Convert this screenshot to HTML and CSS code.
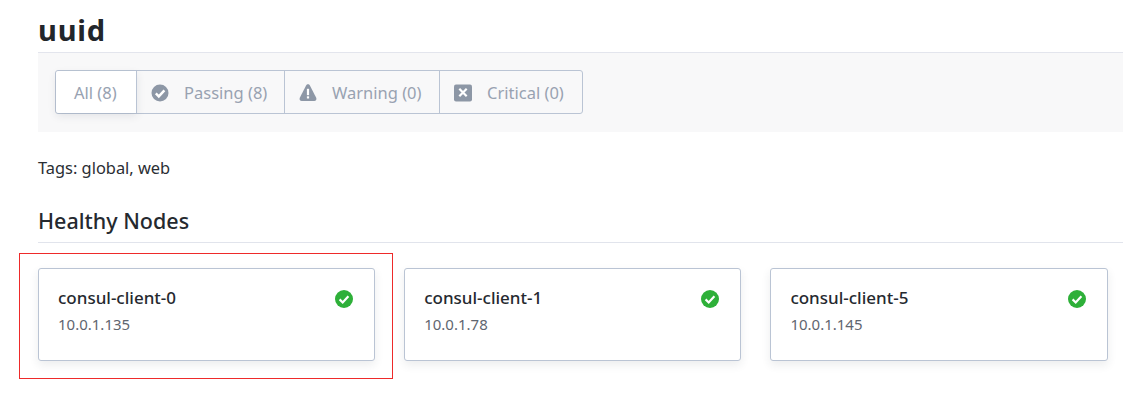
FILE: index.html
```html
<!DOCTYPE html>
<html lang="en">
<head>
<meta charset="utf-8">
<title>uuid</title>
<link rel="stylesheet" href="styles.css">
</head>
<body>
<main class="page">
  <header class="title-row"><h1 class="title">uuid</h1></header>
  <section class="filter-bar">
    <div class="tabs">
      <div class="tab tab-active">All (8)</div>
      <div class="tab tab-passing">
        <svg class="tab-icon" viewBox="0 0 18 18"><circle cx="9" cy="9" r="8.5" fill="#8d97a6"/><path d="M4.8 9.4l3 3 5.6-6" fill="none" stroke="#fff" stroke-width="2.4"/></svg>
        Passing (8)
      </div>
      <div class="tab tab-warning">
        <svg class="tab-icon" viewBox="0 0 18 18"><path d="M9 .3c.9 0 1.500.5 1.900 1.200l6.300 12.300c.7 1.500-.2 3.200-1.900 3.200H2.700C1 17 .1 15.300.8 13.800L7.100 1.500C7.500.8 8.100.3 9 .3z" fill="#8d97a6"/><rect x="7.900" y="4.800" width="2.200" height="6.400" fill="#fff"/><rect x="7.900" y="12.300" width="2.200" height="2.200" fill="#fff"/></svg>
        Warning (0)
      </div>
      <div class="tab tab-critical">
        <svg class="tab-icon" viewBox="0 0 18 18"><rect width="18" height="17" y=".5" rx="2" fill="#8d97a6"/><path d="M5.300 4.800l7.400 7.400M12.700 4.800l-7.400 7.400" stroke="#fff" stroke-width="2.200"/></svg>
        Critical (0)
      </div>
    </div>
  </section>
  <p class="tags">Tags: global, web</p>
  <h2 class="section-title">Healthy Nodes</h2>
  <section class="cards">
    <article class="card">
      <div class="card-text"><div class="node-name">consul-client-0</div><div class="node-ip">10.0.1.135</div></div>
      <svg class="ok-icon" viewBox="0 0 18 18"><circle cx="9" cy="9" r="9" fill="#2eb039"/><path d="M4.600 9.400l3.100 3.100 5.700-6.200" fill="none" stroke="#fff" stroke-width="2.200"/></svg>
      <div class="highlight"></div>
    </article>
    <article class="card">
      <div class="card-text"><div class="node-name">consul-client-1</div><div class="node-ip">10.0.1.78</div></div>
      <svg class="ok-icon" viewBox="0 0 18 18"><circle cx="9" cy="9" r="9" fill="#2eb039"/><path d="M4.600 9.400l3.100 3.100 5.700-6.200" fill="none" stroke="#fff" stroke-width="2.200"/></svg>
    </article>
    <article class="card">
      <div class="card-text"><div class="node-name">consul-client-5</div><div class="node-ip">10.0.1.145</div></div>
      <svg class="ok-icon" viewBox="0 0 18 18"><circle cx="9" cy="9" r="9" fill="#2eb039"/><path d="M4.600 9.400l3.100 3.100 5.700-6.200" fill="none" stroke="#fff" stroke-width="2.200"/></svg>
    </article>
  </section>
</main>
</body>
</html>
```
FILE: styles.css
```css
* { box-sizing: border-box; }
html, body { margin: 0; background: #fff; }
body { font-family: "Noto Sans", "Open Sans", sans-serif; color: #25292f; overflow: hidden; }
.page { padding-left: 38px; height: 407px; }
.title-row { height: 53px; border-bottom: 1px solid #e3e5ed; padding-top: 10px; }
.title { margin: 0; font-size: 29px; line-height: 40px; font-weight: 700; letter-spacing: .8px; color: #22262b; }
.filter-bar { height: 79px; background: #f8f8f9; padding: 17px 17px; }
.tabs { display: inline-flex; height: 44px; border: 1px solid #bac4d4; border-radius: 3px; color: #98a2b1; font-size: 16.500px; line-height: 22px; }
.tab { display: flex; align-items: center; padding-left: 14px; padding-top: 2px; border-right: 1px solid #bac4d4; white-space: nowrap; }
.tab:last-child { border-right: 0; }
.tab-active { width: 81px; padding-left: 18px; background: #fff; box-shadow: 0 3px 8px rgba(40, 50, 70, .1); border-radius: 3px 0 0 3px; }
.tab-passing { width: 148px; }
.tab-warning { width: 155px; }
.tab-critical { width: 142px; }
.tab-icon { width: 18px; height: 18px; margin-top: -1px; margin-right: 15px; flex: none; }
.tags { margin: 25px 0 0; font-size: 16.400px; line-height: 22px; color: #2a2e34; }
.section-title { margin: 26px 0 0; height: 38px; border-bottom: 1px solid #e1e4ec; font-size: 21.500px; line-height: 32px; font-weight: 500; color: #25292f; }
.cards { display: grid; grid-template-columns: repeat(3, 1fr); gap: 29px; width: 1069.600px; margin-top: 25px; }
.card { position: relative; display: flex; justify-content: space-between; height: 93px; padding: 18px 21px 0 19px; background: #fff; border: 1px solid #bac4d4; border-radius: 3px; box-shadow: 0 4px 10px rgba(40, 50, 70, .09); }
.node-name { font-size: 17px; line-height: 22px; font-weight: 500; color: #25292f; }
.node-ip { margin-top: 5px; font-size: 15px; line-height: 20px; color: #5f6670; }
.ok-icon { width: 18px; height: 18px; margin-top: 3px; flex: none; }
.highlight { position: absolute; left: -20px; top: -16px; width: 374px; height: 126px; border: 1px solid #ee2a2a; pointer-events: none; }
```
